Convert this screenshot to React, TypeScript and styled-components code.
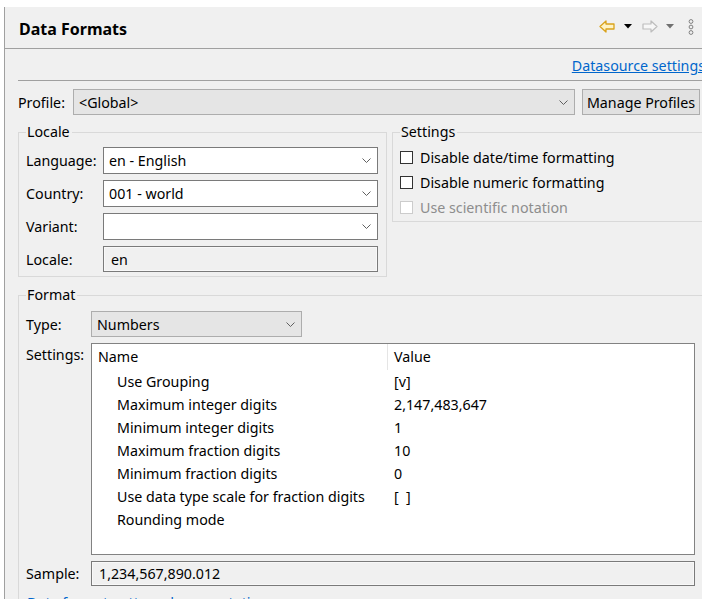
import React from "react";
import styled, { createGlobalStyle } from "styled-components";

const Global = createGlobalStyle`
  html, body { margin: 0; padding: 0; background: #ffffff; width: 702px; height: 599px; overflow: hidden; }
  body { font-family: "Noto Sans", "Open Sans", sans-serif; font-size: 14.25px; color: #000; }
  * { box-sizing: border-box; }
`;

const Page = styled.div`
  padding-top: 7px;
  height: 599px;
`;

const Frame = styled.div`
  margin-left: 4px;
  width: 698px;
  height: 592px;
  border-left: 1px solid #a0a0a0;
  background: #f0f0f0;
  overflow: hidden;
`;

const TitleBar = styled.div`
  height: 42px;
  border-bottom: 1px solid #a0a0a0;
  display: flex;
  align-items: center;
  padding: 2px 8px 0 14px;
`;

const Title = styled.div`
  font-size: 16px;
  font-weight: 700;
  flex: 1;
`;

const Tools = styled.div`
  display: flex;
  align-items: center;
  margin-top: -4px;
`;

const ToolIcon = styled.span<{ $w: number; $ml?: number }>`
  display: inline-flex;
  width: ${(p) => p.$w}px;
  margin-left: ${(p) => p.$ml ?? 0}px;
  justify-content: center;
  align-items: center;
`;

const Content = styled.div`
  padding-left: 13px;
`;

const LinkRow = styled.div`
  height: 32px;
  border-bottom: 1px solid #a0a0a0;
  display: flex;
  align-items: center;
  justify-content: flex-end;
  padding-top: 2px;
  margin-right: -3px;
`;

const Link = styled.a`
  color: #0066cc;
  text-decoration: underline;
  cursor: pointer;
  white-space: nowrap;
`;

const ProfileRow = styled.div`
  margin-top: 8px;
  height: 26px;
  display: flex;
  align-items: stretch;
  padding-right: 2px;
`;

const RowLabel = styled.label<{ $w: number }>`
  width: ${(p) => p.$w}px;
  flex: none;
  display: flex;
  align-items: center;
`;

const Combo = styled.div<{ $gray?: boolean; $w?: number }>`
  ${(p) => (p.$w ? `width: ${p.$w}px; flex: none;` : "flex: 1;")}
  height: ${(p) => (p.$gray ? 26 : 27)}px;
  background: ${(p) => (p.$gray ? "#e5e5e5" : "#ffffff")};
  border: 1px solid ${(p) => (p.$gray ? "#adadad" : "#7a7a7a")};
  display: flex;
  align-items: center;
  padding: 0 6px 0 5px;
`;

const ComboText = styled.span`
  flex: 1;
  white-space: nowrap;
`;

const Button = styled.div`
  margin-left: 7px;
  width: 118px;
  background: #e1e1e1;
  border: 1px solid #adadad;
  display: flex;
  align-items: center;
  justify-content: center;
  white-space: nowrap;
`;

const GroupsRow = styled.div`
  margin-top: 7px;
  display: grid;
  grid-template-columns: 369px 330px;
  column-gap: 5px;
  align-items: start;
`;

const Group = styled.fieldset<{ $pb?: number }>`
  margin: 0;
  border: 1px solid #d9d9d9;
  padding: 0 7px ${(p) => p.$pb ?? 4}px 7px;
  min-width: 0;
`;

const Legend = styled.legend`
  padding: 0 2px 0 1px;
  line-height: 20px;
  margin-left: 0;
`;

const FormGrid = styled.div<{ $cols: string; $gap: number; $pt: number }>`
  display: grid;
  grid-template-columns: ${(p) => p.$cols};
  row-gap: ${(p) => p.$gap}px;
  padding-top: ${(p) => p.$pt}px;
`;

const FieldLabel = styled.div<{ $top?: boolean }>`
  display: flex;
  align-items: ${(p) => (p.$top ? "flex-start" : "center")};
  padding-top: ${(p) => (p.$top ? 2 : 0)}px;
`;

const ReadBox = styled.div<{ $h: number }>`
  height: ${(p) => p.$h}px;
  background: #f0f0f0;
  border: 1px solid #7a7a7a;
  box-shadow: inset 0 0 0 1px #f8f8f8;
  display: flex;
  align-items: center;
  padding: 0 6px 0 7px;
`;

const CheckList = styled.div`
  padding-top: 3px;
  display: flex;
  flex-direction: column;
`;

const CheckRow = styled.div<{ $disabled?: boolean }>`
  height: 25px;
  display: flex;
  align-items: center;
  gap: 7px;
  color: ${(p) => (p.$disabled ? "#8d8d8d" : "#000")};
  white-space: nowrap;
`;

const CheckBox = styled.span<{ $disabled?: boolean }>`
  width: 13px;
  height: 13px;
  flex: none;
  background: #fff;
  border: 1px solid ${(p) => (p.$disabled ? "#cccccc" : "#333333")};
`;

const FormatGroup = styled(Group)`
  margin-top: 8px;
  width: 720px;
`;

const Table = styled.div`
  height: 212px;
  background: #fff;
  border: 1px solid #828282;
  display: flex;
  flex-direction: column;
`;

const TableHead = styled.div`
  height: 26px;
  display: grid;
  grid-template-columns: 296px 1fr;
  flex: none;
`;

const HeadCell = styled.div<{ $sep?: boolean }>`
  display: flex;
  align-items: center;
  padding-left: 6px;
  padding-bottom: 2px;
  border-right: ${(p) => (p.$sep ? "1px solid #e5e5e5" : "none")};
`;

const TableRow = styled.div`
  height: 23px;
  display: grid;
  grid-template-columns: 296px 1fr;
  flex: none;
`;

const Cell = styled.div<{ $indent?: number }>`
  display: flex;
  align-items: center;
  padding-left: ${(p) => p.$indent ?? 6}px;
  white-space: nowrap;
  overflow: hidden;
`;

const ValueText = styled.span`
  white-space: pre;
`;

const BottomLink = styled.div`
  margin-top: 7px;
  padding-left: 1px;
`;

const Chevron = () => (
  <svg width="9" height="5" viewBox="0 0 9 5">
    <polyline points="0.5,0.5 4.5,4.5 8.5,0.5" fill="none" stroke="#606060" strokeWidth="1" />
  </svg>
);

const BackArrow = () => (
  <svg width="16" height="13" viewBox="0 0 16 13">
    <path
      d="M1 6.5 L7 1 L7 4 L15 4 L15 9 L7 9 L7 12 Z"
      fill="#fff3c4"
      stroke="#d9a21b"
      strokeWidth="1.3"
      strokeLinejoin="round"
    />
  </svg>
);

const ForwardArrow = () => (
  <svg width="16" height="13" viewBox="0 0 16 13">
    <path
      d="M15 6.5 L9 1 L9 4 L1 4 L1 9 L9 9 L9 12 Z"
      fill="#f7f7f7"
      stroke="#bdbdbd"
      strokeWidth="1.2"
      strokeLinejoin="round"
    />
  </svg>
);

const Tri = ({ color }: { color: string }) => (
  <svg width="8" height="5" viewBox="0 0 8 5">
    <path d="M0 0 L8 0 L4 4.5 Z" fill={color} />
  </svg>
);

const Dots = () => (
  <svg width="6" height="16" viewBox="0 0 6 16">
    <circle cx="3" cy="2.5" r="1.9" fill="none" stroke="#808080" strokeWidth="1" />
    <circle cx="3" cy="8" r="1.9" fill="none" stroke="#808080" strokeWidth="1" />
    <circle cx="3" cy="13.5" r="1.9" fill="none" stroke="#808080" strokeWidth="1" />
  </svg>
);

const rows: [string, string][] = [
  ["Use Grouping", "[v]"],
  ["Maximum integer digits", "2,147,483,647"],
  ["Minimum integer digits", "1"],
  ["Maximum fraction digits", "10"],
  ["Minimum fraction digits", "0"],
  ["Use data type scale for fraction digits", "[  ]"],
  ["Rounding mode", ""],
];

export default function App() {
  return (
    <Page>
      <Global />
      <Frame>
        <TitleBar>
          <Title>Data Formats</Title>
          <Tools>
            <ToolIcon $w={16}>
              <BackArrow />
            </ToolIcon>
            <ToolIcon $w={8} $ml={9}>
              <Tri color="#000" />
            </ToolIcon>
            <ToolIcon $w={16} $ml={10}>
              <ForwardArrow />
            </ToolIcon>
            <ToolIcon $w={8} $ml={8}>
              <Tri color="#707070" />
            </ToolIcon>
            <ToolIcon $w={6} $ml={14}>
              <Dots />
            </ToolIcon>
          </Tools>
        </TitleBar>
        <Content>
          <LinkRow>
            <Link>Datasource settings</Link>
          </LinkRow>
          <ProfileRow>
            <RowLabel $w={55}>Profile:</RowLabel>
            <Combo $gray>
              <ComboText>&lt;Global&gt;</ComboText>
              <Chevron />
            </Combo>
            <Button>Manage Profiles</Button>
          </ProfileRow>
          <GroupsRow>
            <Group $pb={4}>
              <Legend>Locale</Legend>
              <FormGrid $cols="77px 275px" $gap={6} $pt={5}>
                <FieldLabel>Language:</FieldLabel>
                <Combo>
                  <ComboText>en - English</ComboText>
                  <Chevron />
                </Combo>
                <FieldLabel>Country:</FieldLabel>
                <Combo>
                  <ComboText>001 - world</ComboText>
                  <Chevron />
                </Combo>
                <FieldLabel>Variant:</FieldLabel>
                <Combo>
                  <ComboText></ComboText>
                  <Chevron />
                </Combo>
                <FieldLabel>Locale:</FieldLabel>
                <ReadBox $h={26}>en</ReadBox>
              </FormGrid>
            </Group>
            <Group $pb={1}>
              <Legend>Settings</Legend>
              <CheckList>
                <CheckRow>
                  <CheckBox />
                  Disable date/time formatting
                </CheckRow>
                <CheckRow>
                  <CheckBox />
                  Disable numeric formatting
                </CheckRow>
                <CheckRow $disabled>
                  <CheckBox $disabled />
                  Use scientific notation
                </CheckRow>
              </CheckList>
            </Group>
          </GroupsRow>
          <FormatGroup $pb={8}>
            <Legend>Format</Legend>
            <FormGrid $cols="65px 604px" $gap={6} $pt={6}>
              <FieldLabel>Type:</FieldLabel>
              <div>
                <Combo $gray $w={211}>
                  <ComboText>Numbers</ComboText>
                  <Chevron />
                </Combo>
              </div>
              <FieldLabel $top>Settings:</FieldLabel>
              <Table>
                <TableHead>
                  <HeadCell $sep>Name</HeadCell>
                  <HeadCell>Value</HeadCell>
                </TableHead>
                {rows.map(([n, v]) => (
                  <TableRow key={n}>
                    <Cell $indent={25}>{n}</Cell>
                    <Cell>
                      <ValueText>{v}</ValueText>
                    </Cell>
                  </TableRow>
                ))}
              </Table>
              <FieldLabel>Sample:</FieldLabel>
              <ReadBox $h={25}>1,234,567,890.012</ReadBox>
            </FormGrid>
            <BottomLink>
              <Link>Date format pattern documentation</Link>
            </BottomLink>
          </FormatGroup>
        </Content>
      </Frame>
    </Page>
  );
}
